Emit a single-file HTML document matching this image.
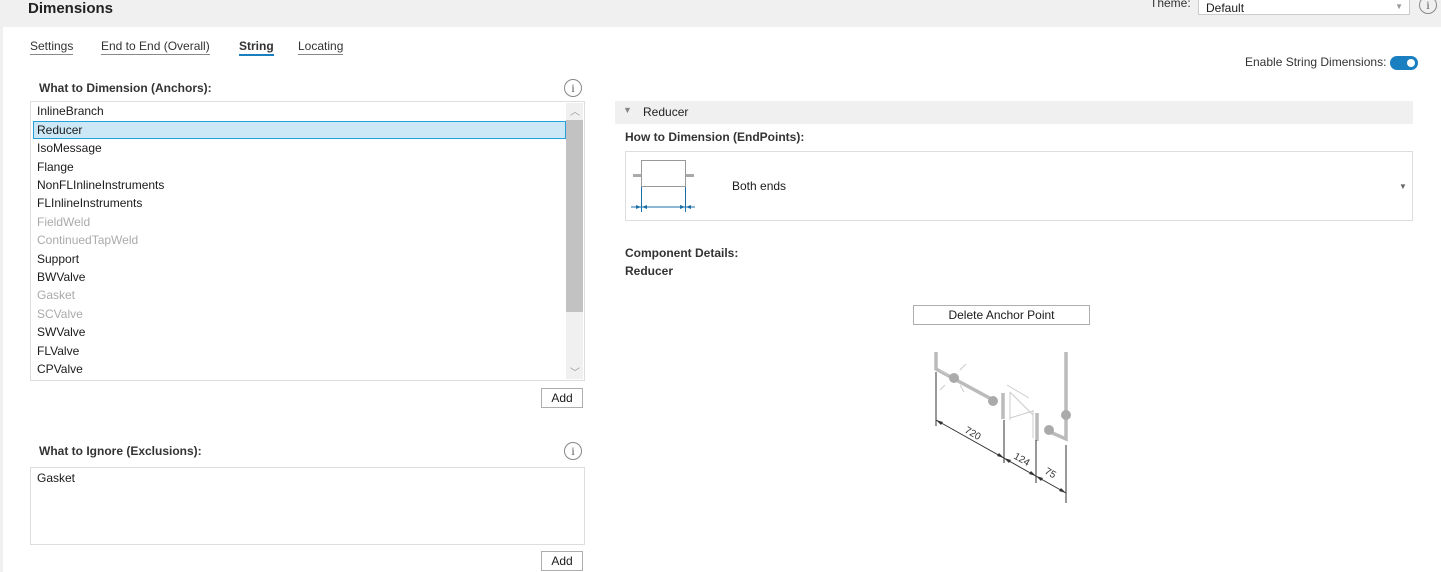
<!DOCTYPE html>
<html><head><style>
*{margin:0;padding:0;box-sizing:border-box}
body{width:1441px;height:572px;background:#f0f0f0;font-family:"Liberation Sans",sans-serif;font-size:12px;color:#1a1a1a;position:relative;overflow:hidden}
.a{position:absolute}
.panel{left:3px;top:27px;width:1438px;height:545px;background:#fff}
.title{left:28px;top:0px;font-size:15px;font-weight:bold;color:#222}
.tab{top:39px;font-size:12px;color:#333;border-bottom:1px solid #888;padding-bottom:1px}
.hdr{font-weight:bold;font-size:12px;color:#333}
.info{width:18px;height:18px;border:1px solid #888;border-radius:50%;font-family:"Liberation Serif",serif;font-size:12px;text-align:center;line-height:16px;color:#555}
.list{border:1px solid #ddd;background:#fff}
.it{position:absolute;left:6px;font-size:12px}
.g{color:#aaa}
.btn{border:1px solid #adadad;background:#fff;font-size:12px;text-align:center}
</style></head><body>
<div class="a title">Dimensions</div>
<div class="a" style="left:1150px;top:-4px;font-size:12px;color:#333">Theme:</div>
<div class="a" style="left:1198px;top:-8px;width:212px;height:23px;border:1px solid #ccc;background:#fff;font-size:12px;padding:8px 7px 0">Default<span style="position:absolute;right:6px;top:9px;color:#999;font-size:8px">▼</span></div>
<div class="a info" style="left:1419px;top:-4px">i</div>
<div class="a panel"></div>
<div class="a tab" style="left:30px">Settings</div>
<div class="a tab" style="left:101px">End to End (Overall)</div>
<div class="a tab" style="left:239px;font-weight:bold;border-bottom:2px solid #1a7fc1">String</div>
<div class="a tab" style="left:298px">Locating</div>
<div class="a" style="left:1245px;top:55px;color:#333">Enable String Dimensions:</div>
<div class="a" style="left:1390px;top:56px;width:28px;height:14px;border-radius:7px;background:#1a7fc1"><div style="position:absolute;right:3px;top:3px;width:8px;height:8px;border-radius:50%;background:#fff"></div></div>

<div class="a hdr" style="left:39px;top:81px">What to Dimension (Anchors):</div>
<div class="a info" style="left:564px;top:79px">i</div>
<div class="a list" style="left:30px;top:101px;width:555px;height:280px">
<div class="a" style="left:535px;top:1px;width:17px;height:276px;background:#f0f0f0"></div>
<div class="a" style="left:535px;top:18px;width:17px;height:192px;background:#c2c2c2"></div>
<div class="a" style="left:539px;top:1px;color:#999;font-size:10px">︿</div>
<div class="a" style="left:539px;top:262px;color:#999;font-size:10px">﹀</div>
<div class="a" style="left:2px;top:19px;width:533px;height:18px;background:#cce8f6;border:1px solid #26a0da"></div>
<div class="it" style="top:2px">InlineBranch</div>
<div class="it" style="top:21px">Reducer</div>
<div class="it" style="top:39px">IsoMessage</div>
<div class="it" style="top:58px">Flange</div>
<div class="it" style="top:76px">NonFLInlineInstruments</div>
<div class="it" style="top:94px">FLInlineInstruments</div>
<div class="it g" style="top:113px">FieldWeld</div>
<div class="it g" style="top:131px">ContinuedTapWeld</div>
<div class="it" style="top:150px">Support</div>
<div class="it" style="top:168px">BWValve</div>
<div class="it g" style="top:186px">Gasket</div>
<div class="it g" style="top:205px">SCValve</div>
<div class="it" style="top:223px">SWValve</div>
<div class="it" style="top:242px">FLValve</div>
<div class="it" style="top:260px">CPValve</div>
</div>
<div class="a btn" style="left:541px;top:388px;width:42px;height:20px;line-height:18px">Add</div>

<div class="a hdr" style="left:39px;top:444px">What to Ignore (Exclusions):</div>
<div class="a info" style="left:564px;top:442px">i</div>
<div class="a list" style="left:30px;top:467px;width:555px;height:78px"><div class="it" style="top:3px">Gasket</div></div>
<div class="a btn" style="left:541px;top:551px;width:42px;height:20px;line-height:18px">Add</div>

<div class="a" style="left:615px;top:101px;width:798px;height:23px;background:#f0f0f0"></div>
<div class="a" style="left:623px;top:105px;color:#888;font-size:9px">▼</div>
<div class="a" style="left:643px;top:105px;font-size:12px;color:#222">Reducer</div>
<div class="a hdr" style="left:625px;top:130px">How to Dimension (EndPoints):</div>
<div class="a" style="left:625px;top:151px;width:788px;height:70px;border:1px solid #ddd;background:#fff"></div>
<svg class="a" style="left:628px;top:156px" width="72" height="60">
<rect x="13.5" y="4.5" width="44" height="26" fill="#fff" stroke="#999"/>
<rect x="5" y="18" width="8" height="3" fill="#aaa"/><rect x="58" y="18" width="8" height="3" fill="#aaa"/>
<line x1="13.5" y1="31" x2="13.5" y2="56" stroke="#1a6fa8"/><line x1="57.5" y1="31" x2="57.5" y2="56" stroke="#1a6fa8"/>
<line x1="3" y1="51" x2="67" y2="51" stroke="#1a6fa8"/>
<path d="M13 51l-5-2v4zM14 51l5-2v4zM57 51l-5-2v4zM58 51l5-2v4z" fill="#1a6fa8"/>
</svg>
<div class="a" style="left:732px;top:179px">Both ends</div>
<div class="a" style="left:1399px;top:182px;color:#666;font-size:8px">▼</div>
<div class="a hdr" style="left:625px;top:246px">Component Details:</div>
<div class="a hdr" style="left:625px;top:264px">Reducer</div>
<div class="a btn" style="left:913px;top:305px;width:177px;height:20px;line-height:18px">Delete Anchor Point</div>
<svg class="a" style="left:900px;top:340px" width="200" height="170" fill="none">
<g stroke="#bbb" stroke-width="3.5"><path d="M36 12V29L95 61"/><path d="M166 12V99L150 92"/><path d="M103 53V79M137 73V101"/></g>
<g fill="#aaa"><circle cx="54" cy="38" r="5"/><circle cx="93" cy="61" r="5"/><circle cx="149" cy="90" r="5"/><circle cx="166" cy="75" r="5"/></g>
<g stroke="#ccc" stroke-width="1"><path d="M40 30L48 35M60 30L66 24M45 45L40 50M60 45L64 52"/><path d="M110 52L133 75M110 78L133 71M107 45L129 58M110 52V80M133 70V98"/></g>
<g stroke="#333" stroke-width="1"><path d="M36 32V86M104 80V123M136 100V143M166 105V163M36 80L166 153"/></g>
<path d="M36 80l7 2-2 3zM104 118l-7-2 2-3zM104 118l7 2-2 3zM136 136l-7-2 2-3zM136 136l7 2-2 3zM166 153l-7-2 2-3z" fill="#333"/>
<text x="64" y="92" font-size="10" fill="#333" transform="rotate(30 64 92)" font-family="Liberation Sans">720</text>
<text x="113" y="118" font-size="10" fill="#333" transform="rotate(30 113 118)" font-family="Liberation Sans">124</text>
<text x="144" y="133" font-size="10" fill="#333" transform="rotate(30 144 133)" font-family="Liberation Sans">75</text>
</svg>
</body></html>
